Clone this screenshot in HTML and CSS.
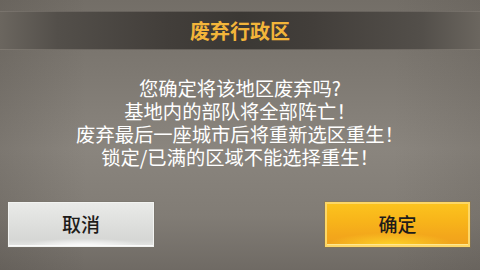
FILE: index.html
```html
<!DOCTYPE html>
<html lang="zh-CN">
<head>
<meta charset="utf-8">
<link rel="stylesheet" href="styles.css">
</head>
<body>
<div class="screen">
  <div class="titlebar"><span class="title">废弃行政区</span></div>
  <div class="message">
    <p>您确定将该地区废弃吗?</p>
    <p>基地内的部队将全部阵亡！</p>
    <p>废弃最后一座城市后将重新选区重生！</p>
    <p>锁定/已满的区域不能选择重生！</p>
  </div>
  <div class="actions">
    <button class="btn btn-cancel">取消</button>
    <button class="btn btn-ok">确定</button>
  </div>
</div>
</body>
</html>
```
FILE: styles.css
```css
html, body {
  margin: 0;
  padding: 0;
}
body {
  width: 480px;
  height: 270px;
  overflow: hidden;
  font-family: "Noto Sans CJK SC", "Noto Sans", sans-serif;
}
.screen {
  width: 480px;
  height: 270px;
  display: flex;
  flex-direction: column;
  background:
    linear-gradient(90deg, rgba(60,55,50,0.18) 0%, rgba(0,0,0,0) 18%, rgba(0,0,0,0) 82%, rgba(60,55,50,0.12) 100%),
    linear-gradient(180deg, #736e67 0%, #7d7871 25%, #8a857e 55%, #817c75 80%, #6f6a64 100%);
}
.titlebar {
  margin-top: 11px;
  height: 39px;
  display: flex;
  align-items: center;
  justify-content: center;
  background: linear-gradient(90deg, #6b665f 0%, #534f4a 12%, #423e3a 35%, #3b3834 50%, #423e3a 65%, #534f4a 88%, #6b665f 100%);
  border-top: 1px solid rgba(140,134,126,0.45);
  border-bottom: 1px solid rgba(150,144,136,0.45);
  box-sizing: border-box;
}
.title {
  color: #f3b53a;
  font-size: 20px;
  font-weight: 700;
  line-height: 1;
  margin-top: 1px;
}
.message {
  margin-top: 27px;
  color: #ffffff;
  font-size: 19.3px;
  line-height: 23px;
  text-align: center;
}
.message p {
  margin: 0;
  white-space: nowrap;
}
.actions {
  margin-top: auto;
  padding: 0 10px 23px 8px;
  display: flex;
  justify-content: space-between;
}
.btn {
  width: 146px;
  height: 45px;
  box-sizing: border-box;
  font-family: "Noto Sans CJK SC", "Noto Sans", sans-serif;
  font-size: 19px;
  font-weight: 500;
  color: #1e1c1a;
  padding: 0 0 2px 0;
  margin: 0;
  cursor: pointer;
  outline: none;
}
.btn-cancel {
  border: 1px solid #f2f3f1;
  background:
    radial-gradient(ellipse 40% 18% at 52% 100%, rgba(255,255,255,0.95) 0%, rgba(255,255,255,0) 100%),
    linear-gradient(180deg, #e9eae8 0%, #dfe0de 45%, #d6d7d5 85%, #e4e5e3 100%);
  box-shadow: 0 0 0 1px rgba(120,115,108,0.5), inset 0 -1px 0 #fafafa;
}
.btn-ok {
  width: 145px;
  border: 2px solid #fdd766;
  background:
    radial-gradient(ellipse 45% 30% at 45% 100%, rgba(255,214,40,0.95) 0%, rgba(255,214,40,0) 100%),
    linear-gradient(180deg, #fcc31e 0%, #f8b51a 40%, #f3a61b 80%, #f0a31c 100%);
  box-shadow: 0 0 0 1px rgba(150,120,60,0.35), inset 0 -1px 0 #ffe890;
}
```
